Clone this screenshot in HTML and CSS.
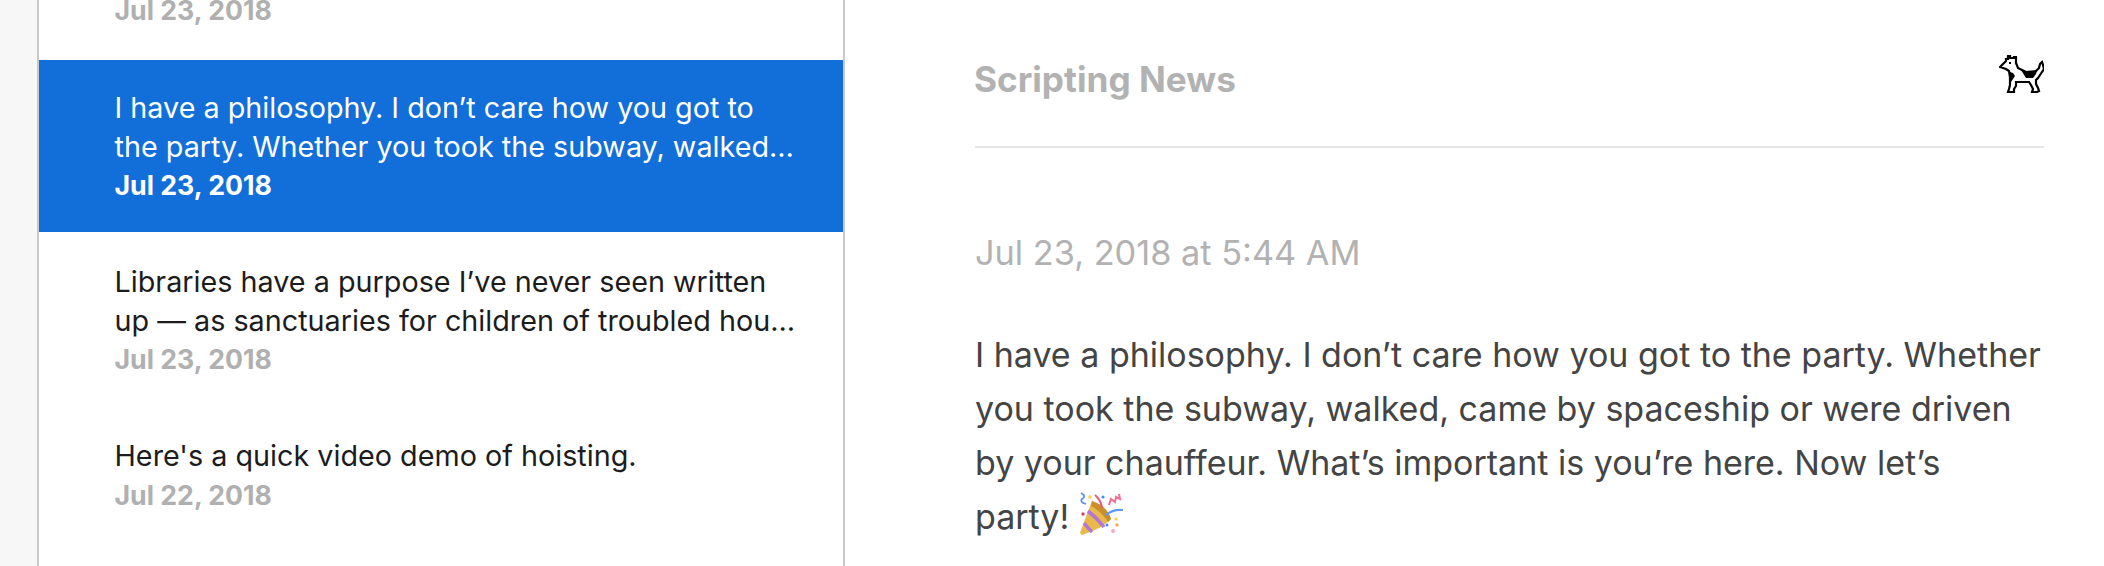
FILE: index.html
```html
<!DOCTYPE html>
<html lang="en">
<head>
<meta charset="utf-8">
<title>Scripting News</title>
<link rel="stylesheet" href="styles.css">
</head>
<body>
<div class="gutter"></div>
<section class="list">
  <article class="row row-tail">
    <p class="row-date">Jul 23, 2018</p>
  </article>
  <article class="row selected">
    <p class="row-title">I have a philosophy. I don’t care how you got to<br>the party. Whether you took the subway, walked…</p>
    <p class="row-date">Jul 23, 2018</p>
  </article>
  <article class="row">
    <p class="row-title">Libraries have a purpose I’ve never seen written<br>up — as sanctuaries for children of troubled hou…</p>
    <p class="row-date">Jul 23, 2018</p>
  </article>
  <article class="row">
    <p class="row-title">Here's a quick video demo of hoisting.</p>
    <p class="row-date">Jul 22, 2018</p>
  </article>
</section>
<main class="detail">
  <header class="detail-head">
    <h1 class="feed-name">Scripting News</h1>
    <svg class="dog" viewBox="0 0 45 38" width="45" height="38" aria-hidden="true">
      <path class="dog-body" d="M1 12 L3 10 L5 8 L7 6 L7 4 L9 4 L9 1 L11 1 L11 3 L15 3 L15 2 L17 2 L17 8 L19 13 L23 15 L27 17 L36 17 L38 15 L40 13 L41 9 L43 7 L44 10 L45 14 L43 17 L41 20 L39 23 L37 25 L37 29 L39 33 L40 36 L38 37 L33 37 L34 34 L32 30 L30 27 L17 27 L17 31 L15 34 L15 37 L9 37 L10 34 L11 30 L11 22 L10 16 L7 14 Z"/>
      <path class="dog-spot" d="M22 15 L27 16 L38 15 L37 19 L34 23 L27 23 Z"/>
      <path class="dog-spot" d="M11 17 L14 18 L16 21 L14 24 L12 27 L11 22 Z"/>
      <path class="dog-spot" d="M10 7h2v2h-2z"/>
    </svg>
  </header>
  <p class="post-date">Jul 23, 2018 at 5:44 AM</p>
  <p class="post-body">I have a philosophy. I don’t care how you got to the party. Whether you took the subway, walked, came by spaceship or were driven by your chauffeur. What’s important is you’re here. Now let’s party!
    <svg class="popper" viewBox="0 0 44 44" width="44" height="44" aria-hidden="true">
      <path d="M13 9 Q28 14 32 27 Q24 36 3 43 Q0 42 2 38 Z" fill="#e9b949"/>
      <path d="M13 9 Q28 14 32 27 L29 30 Q22 19 12 14 Z" fill="#c98f2c"/>
      <path d="M9 19 Q18 26 25 35 M5 31 Q9 36 13 40" fill="none" stroke="#b276d8" stroke-width="3.6"/>
      <path d="M23 16 Q22 8 16 3" fill="none" stroke="#f2557a" stroke-width="2"/>
      <path d="M27 23 Q34 17 44 18" fill="none" stroke="#5d9bf5" stroke-width="2.2"/>
      <path d="M2 1 Q8 4 3 7 Q0 10 7 12" fill="none" stroke="#5d8ff0" stroke-width="1.8"/>
      <path d="M30 13 L32 7 L36 10 L37 5 L41 7 L40 2" fill="none" stroke="#f26d8f" stroke-width="2"/>
      <circle cx="11" cy="5" r="1.7" fill="#f3d04a"/><circle cx="24" cy="5" r="1.6" fill="#4f8bf0"/>
      <circle cx="4" cy="22" r="1.7" fill="#e0405f"/><circle cx="37" cy="27" r="1.6" fill="#f3d04a"/>
      <circle cx="28" cy="33" r="1.5" fill="#4f8bf0"/><circle cx="38" cy="33" r="1.7" fill="#f5a55a"/>
      <circle cx="34" cy="39" r="1.9" fill="#f7a3bd"/>
    </svg>
  </p>
</main>
</body>
</html>
```
FILE: styles.css
```css
* { box-sizing: border-box; }
html, body { height: 100%; margin: 0; }
body {
  display: flex;
  overflow: hidden;
  background: #fff;
  font-family: Inter, "Liberation Sans", sans-serif;
}
p, h1 { margin: 0; }

.gutter { flex: 0 0 37px; background: #f7f7f7; }

.list {
  flex: 0 0 808px;
  overflow: hidden;
  border-left: 2px solid #c9c9c9;
  border-right: 2px solid #c9c9c9;
  background: #fff;
}

.row {
  height: 172px;
  margin-bottom: 2px;
  padding: 29px 0 0 75.5px;
}
.row-title {
  font-size: 28.75px;
  line-height: 38.5px;
  color: #1c1c1c;
  white-space: nowrap;
}
.row-date {
  font-size: 26.7px;
  line-height: 39px;
  font-weight: 700;
  color: #b0b0b0;
}
.row-tail { height: 58px; padding-top: 0; }
.row-tail .row-date { line-height: 20px; }
.row.selected { background: #126ed9; }
.row.selected .row-title,
.row.selected .row-date { color: #fff; }

.detail {
  flex: 0 0 1069px;
  margin-left: 130px;
}
.detail-head {
  display: flex;
  align-items: flex-start;
  justify-content: space-between;
  height: 148px;
  padding-top: 55px;
  border-bottom: 2px solid #e6e6e6;
}
.feed-name {
  font-size: 35.2px;
  line-height: 48px;
  margin-left: -1px;
  font-weight: 700;
  color: #b2b2b2;
}
.dog-body { fill: #fff; stroke: #000; stroke-width: 2.2; stroke-linejoin: miter; }
.dog-spot { fill: #000; }

.post-date {
  margin-top: 81px;
  font-size: 34.3px;
  line-height: 48px;
  color: #b2b2b2;
}
.post-body {
  margin-top: 51px;
  font-size: 34px;
  line-height: 54px;
  color: #444;
}
.popper { vertical-align: -7px; margin-left: 0; }
```
